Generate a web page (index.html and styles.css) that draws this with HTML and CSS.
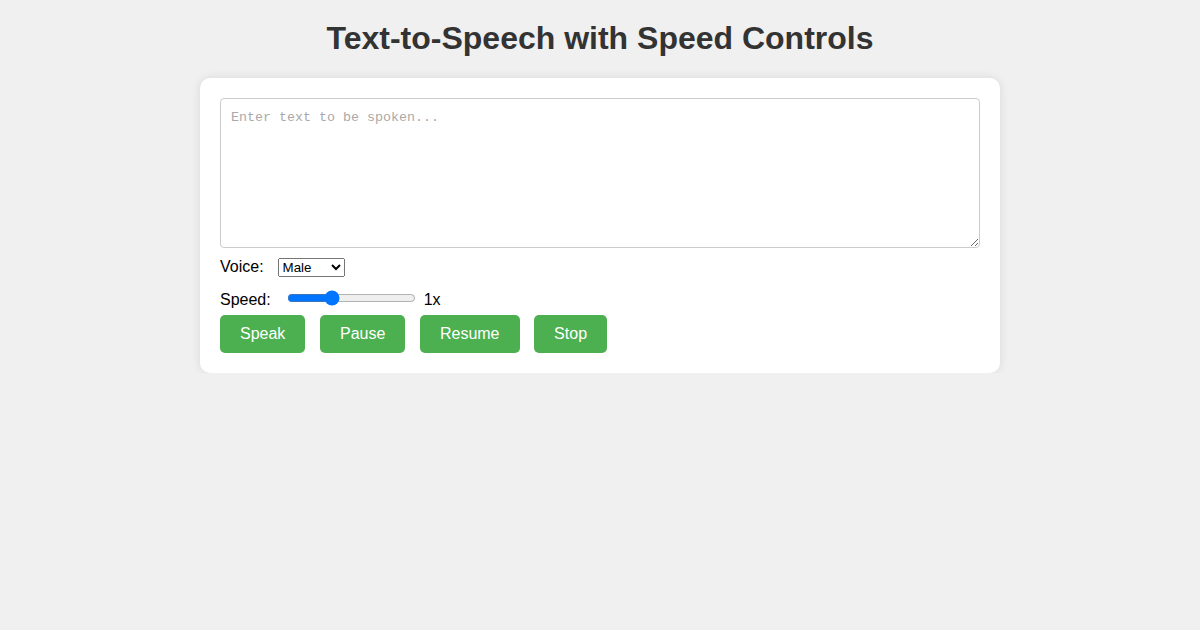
FILE: index.html
```html
<!DOCTYPE html>
<html lang="en">

<head>
    <meta charset="UTF-8">
    <meta name="viewport" content="width=device-width, initial-scale=1.0">
    <title>Text-to-Speech with Speed Controls</title>
    <link rel="stylesheet" href="styles.css">
</head>

<body>
    <h1>Text-to-Speech with Speed Controls</h1>
    <div class="container">
        <textarea id="text" placeholder="Enter text to be spoken..."></textarea>
        <div class="row">
            <label for="voice">Voice:</label>
            <select id="voice">
                <option>Male</option>
                <option>Female</option>
            </select>
        </div>
        <div class="row speed-row">
            <label for="speed">Speed:</label>
            <input type="range" id="speed" min="0.5" max="2" step="0.1" value="1">
            <span id="speed-value">1x</span>
        </div>
        <div class="buttons">
            <button>Speak</button>
            <button>Pause</button>
            <button>Resume</button>
            <button>Stop</button>
        </div>
    </div>
</body>

</html>
```

FILE: styles.css
```css
body {
    margin: 0;
    font-family: "Liberation Sans", Arial, sans-serif;
    background-color: #f0f0f0;
}

h1 {
    margin: 20px 0 21px;
    font-size: 32px;
    text-align: center;
    color: #333;
}

.container {
    width: 800px;
    margin: 0 auto;
    padding: 20px;
    box-sizing: border-box;
    background-color: #fff;
    border-radius: 10px;
    box-shadow: 0 0 10px rgba(0, 0, 0, 0.1);
}

textarea {
    display: block;
    width: 100%;
    height: 150px;
    padding: 11px 10px 9px;
    box-sizing: border-box;
    border: 1px solid #ccc;
    border-radius: 4px;
    font-family: "Liberation Mono", monospace;
    font-size: 13.33px;
    margin-bottom: 8px;
}

textarea::placeholder {
    color: #a9a9a9;
}

.row {
    display: flex;
    align-items: center;
    font-size: 16px;
    height: 22px;
}

.row label {
    margin-right: 14px;
}

select {
    font-family: "Liberation Sans", Arial, sans-serif;
    font-size: 13.33px;
}

.speed-row {
    margin-top: 11px;
}

.speed-row input {
    margin: 0 2px 4px;
    width: 129px;
    accent-color: #0075ff;
}

#speed-value {
    margin-left: 6px;
}

.buttons {
    display: flex;
    gap: 14.6px;
    margin-top: 4px;
}

button {
    padding: 10px 20px;
    font-family: "Liberation Sans", Arial, sans-serif;
    font-size: 16px;
    color: #fff;
    background-color: #4caf50;
    border: none;
    border-radius: 5px;
    cursor: pointer;
}
```
